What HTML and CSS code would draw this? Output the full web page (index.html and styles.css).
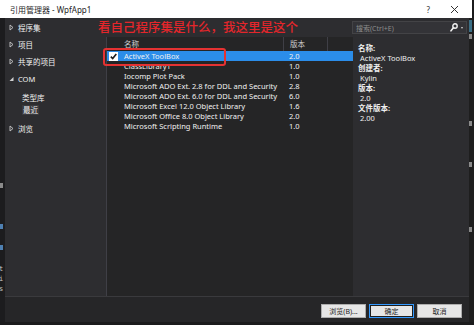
FILE: index.html
```html
<!DOCTYPE html>
<html lang="zh-CN">
<head>
  <meta charset="UTF-8">
  <title>引用管理器 - WpfApp1</title>
  <link rel="stylesheet" href="styles.css">
</head>
<body>

<div class="titlebar">
  <span class="title">引用管理器 - WpfApp1</span>
  <span class="help">?</span>
  <span class="close">
    <svg width="9" height="9" viewBox="0 0 9 9"><path d="M1 1L8 8M8 1L1 8" stroke="#333" stroke-width="1"/></svg>
  </span>
</div>

<div class="frame">
  <div class="edge edge-left">
    <i class="bit grey" style="margin-top:165px"></i>
    <i class="bit blue" style="margin-top:36px"></i>
    <i class="bit blue" style="margin-top:16px"></i>
    <span class="bit-text" style="margin-top:14px">t</span>
    <span class="bit-text">i</span>
    <span class="bit-text">s</span>
  </div>

  <div class="dialog">
    <div class="main">
      <ul class="tree">
        <li class="node"><svg class="arrow" width="5" height="7" viewBox="0 0 5 7"><path d="M1 1L4 3.5L1 6Z" fill="none" stroke="#c8c8c8" stroke-width="0.9"/></svg>程序集</li>
        <li class="node"><svg class="arrow" width="5" height="7" viewBox="0 0 5 7"><path d="M1 1L4 3.5L1 6Z" fill="none" stroke="#c8c8c8" stroke-width="0.9"/></svg>项目</li>
        <li class="node"><svg class="arrow" width="5" height="7" viewBox="0 0 5 7"><path d="M1 1L4 3.5L1 6Z" fill="none" stroke="#c8c8c8" stroke-width="0.9"/></svg>共享的项目</li>
        <li class="node"><svg class="arrow" width="5" height="7" viewBox="0 0 5 7"><path d="M4.5 2L4.5 6L0.5 6Z" fill="#d0d0d0"/></svg>COM</li>
        <li class="leaf first">类型库</li>
        <li class="leaf"><span class="current">最近</span></li>
        <li class="node after"><svg class="arrow" width="5" height="7" viewBox="0 0 5 7"><path d="M1 1L4 3.5L1 6Z" fill="none" stroke="#c8c8c8" stroke-width="0.9"/></svg>浏览</li>
      </ul>

      <div class="content">
        <div class="toolbar">
          <div class="search">
            <span class="hint">搜索(Ctrl+E)</span>
            <svg class="magnifier" width="8" height="9" viewBox="0 0 8 9">
              <circle cx="5" cy="3" r="2.2" fill="none" stroke="#f1f1f1" stroke-width="1.4"/>
              <path d="M3.6 4.6L1 7.8" stroke="#f1f1f1" stroke-width="1.6" stroke-linecap="round"/>
            </svg>
            <span class="drop"></span>
          </div>
        </div>

        <div class="panes">
          <div class="list">
            <div class="row head">
              <span class="col-name">名称</span>
              <span class="col-ver">版本</span>
              <span class="col-rest"></span>
            </div>
            <div class="row selected">
              <span class="col-name"><span class="check">
                <svg width="9" height="9" viewBox="0 0 9 9"><path d="M1.8 4.6L3.7 6.6L7.3 2" fill="none" stroke="#1e1e1e" stroke-width="1.6"/></svg>
              </span>ActiveX ToolBox</span>
              <span class="col-ver">2.0</span>
            </div>
            <div class="row"><span class="col-name">ClassLibrary1</span><span class="col-ver">1.0</span></div>
            <div class="row"><span class="col-name">Iocomp Plot Pack</span><span class="col-ver">1.0</span></div>
            <div class="row"><span class="col-name">Microsoft ADO Ext. 2.8 for DDL and Security</span><span class="col-ver">2.8</span></div>
            <div class="row"><span class="col-name">Microsoft ADO Ext. 6.0 for DDL and Security</span><span class="col-ver">6.0</span></div>
            <div class="row"><span class="col-name">Microsoft Excel 12.0 Object Library</span><span class="col-ver">1.6</span></div>
            <div class="row"><span class="col-name">Microsoft Office 8.0 Object Library</span><span class="col-ver">2.0</span></div>
            <div class="row"><span class="col-name">Microsoft Scripting Runtime</span><span class="col-ver">1.0</span></div>
          </div>

          <dl class="details">
            <dt>名称:</dt>
            <dd>ActiveX ToolBox</dd>
            <dt>创建者:</dt>
            <dd>Kylin</dd>
            <dt>版本:</dt>
            <dd>2.0</dd>
            <dt>文件版本:</dt>
            <dd>2.00</dd>
          </dl>
        </div>
      </div>
    </div>

    <div class="buttons">
      <button class="btn">浏览(B)...</button>
      <button class="btn default">确定</button>
      <button class="btn">取消</button>
    </div>
  </div>

  <div class="edge edge-right">
    <i class="bit teal" style="margin-top:2px"></i>
    <i class="bit grey" style="margin-top:2px"></i>
    <i class="bit grey" style="margin-top:82px"></i>
    <i class="bit grey" style="margin-top:36px"></i>
    <i class="bit grey" style="margin-top:60px"></i>
  </div>
</div>

<!-- 截图上的标注 -->
<div class="note-text">看自己程序集是什么，我这里是这个</div>
<div class="note-box"></div>

</body>
</html>
```

FILE: styles.css
```css
body {
  margin: 0;
  width: 474px;
  height: 325px;
  overflow: hidden;
  background: #1b1b1c;
  font-family: "Noto Sans", "Noto Sans CJK SC", sans-serif;
  font-size: 7.5px;
  color: #f1f1f1;
  position: relative;
}
.titlebar {
  height: 18px;
  width: 472px;
  background: #ffffff;
  display: flex;
  align-items: center;
  color: #1e1e1e;
}
.title {
  font-size: 8px;
  margin-left: 10px;
  flex: 1;
}
.help {
  font-size: 8px;
  color: #333;
  margin-right: 20px;
}
.close {
  display: flex;
  margin-right: 13px;
}
.frame {
  display: flex;
  height: 304px;
}
.edge {
  width: 5px;
  display: flex;
  flex-direction: column;
  background: #1e1e1e;
}
.edge-left {
  background: #1c1c1e;
}
.bit {
  display: block;
  width: 3px;
  height: 5px;
}
.bit.grey { background: #8a8a8a; }
.bit.blue { background: #4e7fb0; }
.bit.teal { background: #3b6f86; height: 12px; }
.bit-text {
  font-family: "DejaVu Sans Mono", monospace;
  font-size: 7px;
  line-height: 10px;
  color: #c8c8c8;
  margin-left: -1px;
}
.dialog {
  width: 464px;
  background: #2d2d30;
  display: flex;
  flex-direction: column;
}
.main {
  display: flex;
  height: 278px;
}
.tree {
  list-style: none;
  margin: 0;
  padding: 1px 0 0 0;
  width: 101px;
  font-size: 7.5px;
}
.node {
  height: 17px;
  display: flex;
  align-items: center;
}
.arrow {
  margin: 0 4px 0 4px;
}
.leaf {
  height: 12px;
  line-height: 12px;
  padding-left: 17px;
}
.leaf.first {
  margin-top: 5px;
}
.current {
  background: #3a3a3e;
  padding: 0 1px;
}
.node.after {
  margin-top: 4px;
}
.content {
  flex: 1;
  display: flex;
  flex-direction: column;
}
.toolbar {
  height: 19px;
  display: flex;
  justify-content: flex-end;
  align-items: center;
  padding-right: 2px;
}
.search {
  width: 113px;
  height: 11px;
  border: 1px solid #434346;
  background: #333337;
  display: flex;
  align-items: center;
}
.hint {
  flex: 1;
  color: #8c8c8c;
  font-size: 7px;
  padding-left: 3px;
}
.magnifier {
  margin-right: 3px;
}
.drop {
  width: 0;
  height: 0;
  border-top: 2px solid #d0d0d0;
  border-left: 1.5px solid transparent;
  border-right: 1.5px solid transparent;
  margin-right: 3px;
}
.panes {
  flex: 1;
  display: flex;
}
.list {
  width: 246px;
  background: #252526;
  border-left: 1px solid #3f3f46;
}
.row {
  height: 10px;
  line-height: 10px;
  display: flex;
  white-space: nowrap;
}
.row.head {
  height: 14px;
  line-height: 14px;
  color: #d0d0d0;
}
.col-name {
  width: 159px;
  padding-left: 17px;
  display: flex;
  align-items: center;
  position: relative;
}
.col-ver {
  width: 38px;
  padding-left: 6px;
}
.head .col-name,
.head .col-ver {
  border-right: 1px solid #3f3f46;
}
.head .col-ver {
  width: 37px;
}
.selected {
  background: #2b8de9;
}
.check {
  position: absolute;
  left: 2px;
  top: 1px;
  width: 9px;
  height: 9px;
  background: #ffffff;
  display: flex;
}
.details {
  flex: 1;
  margin: 0;
  padding: 6px 0 0 5px;
}
.details dt {
  font-weight: bold;
  line-height: 10px;
}
.details dd {
  margin: 0 0 0 2px;
  line-height: 10px;
}
.buttons {
  height: 25px;
  border-top: 1px solid #3a3a3d;
  background: #262628;
  display: flex;
  justify-content: flex-end;
  align-items: center;
  gap: 3px;
  padding-right: 7px;
}
.btn {
  width: 45px;
  height: 14px;
  margin: 0;
  padding: 0;
  font-family: "Noto Sans", "Noto Sans CJK SC", sans-serif;
  font-size: 7px;
  color: #1e1e1e;
  background: #e6e6e6;
  border: 1px solid #adadad;
  margin-top: 2px;
}
.btn.default {
  border: 1px solid #3399ff;
  box-shadow: inset 0 0 0 1px #1e1e1e;
}
.note-text {
  position: absolute;
  left: 98px;
  top: 19px;
  font-family: "Noto Sans CJK SC", sans-serif;
  font-size: 12.5px;
  font-weight: 500;
  line-height: 16px;
  color: #e4262b;
}
.note-box {
  position: absolute;
  left: 103px;
  top: 48px;
  width: 119px;
  height: 14px;
  border: 2px solid #e53232;
  border-radius: 3px;
}
```
